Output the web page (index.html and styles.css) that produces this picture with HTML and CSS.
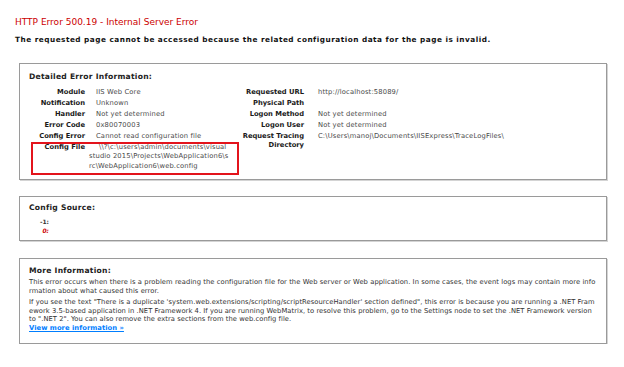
FILE: index.html
```html
<!DOCTYPE html>
<html lang="en">
<head>
  <meta charset="UTF-8" />
  <title>IIS 8.0 Detailed Error - 500.19 - Internal Server Error</title>
  <link rel="stylesheet" href="styles.css">
</head>
<body>
  <div class="header">
    <h3>HTTP Error 500.19 - Internal Server Error</h3>
    <h4>The requested page cannot be accessed because the related configuration data for the page is invalid.</h4>
  </div>

  <div class="box details-box">
    <h4 class="legend">Detailed Error Information:</h4>
    <div class="details">
      <div class="details-left">
        <div class="row"><span class="th">Module</span><span class="td">IIS Web Core</span></div>
        <div class="row"><span class="th">Notification</span><span class="td">Unknown</span></div>
        <div class="row"><span class="th">Handler</span><span class="td">Not yet determined</span></div>
        <div class="row"><span class="th">Error Code</span><span class="td">0x80070003</span></div>
        <div class="row"><span class="th">Config Error</span><span class="td">Cannot read configuration file</span></div>
        <div class="row marked"><span class="th">Config File</span><span class="td">\\?\c:\users\admin\documents\visual studio 2015\Projects\WebApplication6\src\WebApplication6\web.config</span></div>
      </div>
      <div class="details-right">
        <div class="row"><span class="th">Requested URL</span><span class="td">http://localhost:58089/</span></div>
        <div class="row"><span class="th">Physical Path</span><span class="td"></span></div>
        <div class="row"><span class="th">Logon Method</span><span class="td">Not yet determined</span></div>
        <div class="row"><span class="th">Logon User</span><span class="td">Not yet determined</span></div>
        <div class="row"><span class="th">Request Tracing Directory</span><span class="td">C:\Users\manoj\Documents\IISExpress\TraceLogFiles\</span></div>
      </div>
    </div>
  </div>

  <div class="box source-box">
    <h4 class="legend">Config Source:</h4>
    <div class="source">
      <div class="line"><span class="num">-1:</span></div>
      <div class="line highlight"><span class="num">0:</span></div>
    </div>
  </div>

  <div class="box info-box">
    <h4 class="legend">More Information:</h4>
    <p>This error occurs when there is a problem reading the configuration file for the Web server or Web application. In some cases, the event logs may contain more information about what caused this error.</p>
    <p>If you see the text "There is a duplicate 'system.web.extensions/scripting/scriptResourceHandler' section defined", this error is because you are running a .NET Framework 3.5-based application in .NET Framework 4. If you are running WebMatrix, to resolve this problem, go to the Settings node to set the .NET Framework version to ".NET 2". You can also remove the extra sections from the web.config file.<br>
    <a href="#">View more information &raquo;</a></p>
  </div>
</body>
</html>
```

FILE: styles.css
```css
* {
  box-sizing: border-box;
}
body {
  margin: 0;
  font-family: "DejaVu Sans", Verdana, sans-serif;
  font-size: 6.75px;
  color: #333;
  background: #fff;
}
.header {
  padding: 16px 0 0 15px;
}
.header h3 {
  margin: 0;
  font-size: 9px;
  line-height: 12px;
  font-weight: normal;
  color: #cc0000;
}
.header h4 {
  margin: 7px 0 0 0;
  font-size: 7.3px;
  letter-spacing: 0.5px;
  line-height: 10px;
  color: #111;
}
.box {
  margin: 0 17px 0 19px;
  border: 1px solid #9a9a9a;
  box-shadow: 1px 1px 0 #d4d4d4;
  padding: 0 10px 0 9px;
}
.legend {
  margin: 0;
  font-size: 7.6px;
  letter-spacing: 0.25px;
  line-height: 10px;
  color: #222;
}
.details-box {
  margin-top: 18px;
  padding-top: 8px;
  padding-bottom: 4px;
}
.details {
  display: flex;
  margin-top: 5px;
}
.details-left {
  width: 208px;
  margin-left: 2px;
}
.details-right {
  flex: 1;
}
.row {
  display: flex;
  padding: 0.8px 0;
  line-height: 9.4px;
}
.th {
  flex: none;
  text-align: right;
  font-weight: bold;
  color: #1a1a1a;
}
.td {
  text-indent: 7px;
  letter-spacing: 0.15px;
  color: #4a4a4a;
  word-break: break-all;
}
.details-left .th {
  width: 54px;
}
.details-left .td {
  width: 142px;
  margin-left: 4px;
}
.details-right .th {
  width: 65px;
}
.details-right .td {
  margin-left: 7px;
}
.marked {
  padding-bottom: 4px;
  outline: 2px solid #e3141c;
  outline-offset: -2px;
}
.marked .td {
  text-indent: 10px;
}
.source-box {
  margin-top: 16px;
  padding-top: 6px;
  padding-bottom: 5px;
}
.source {
  margin-top: 3.5px;
  font-size: 6px;
  font-weight: bold;
  line-height: 9px;
}
.num {
  display: inline-block;
  width: 20px;
  text-align: right;
}
.highlight {
  color: #cc0000;
  font-style: italic;
}
.info-box {
  margin-top: 17px;
  padding-top: 7px;
  padding-bottom: 11px;
}
.info-box p {
  margin: 2.8px 0 0 0;
  line-height: 8.4px;
  letter-spacing: 0.05px;
  word-break: break-all;
}
.info-box p:first-of-type {
  letter-spacing: 0.07px;
}
.info-box p + p {
  margin-top: 3.2px;
}
a {
  color: #007eff;
  font-weight: bold;
}
```
